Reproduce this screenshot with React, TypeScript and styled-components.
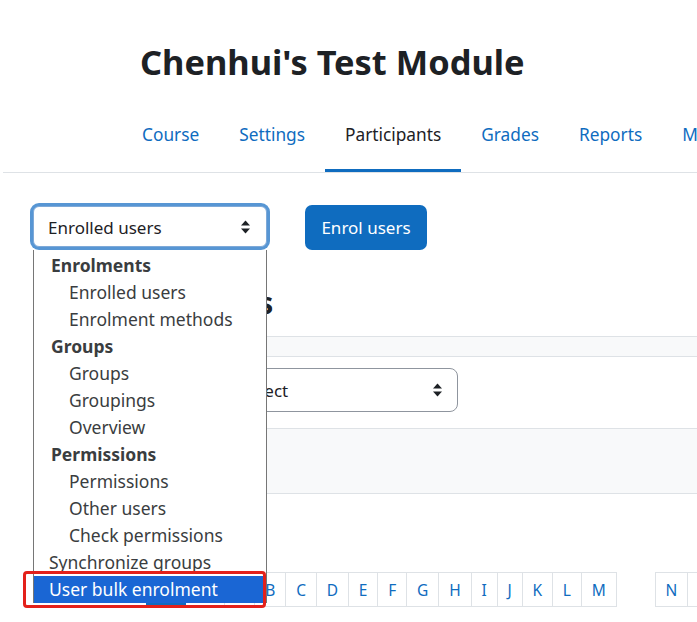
import React from "react";
import styled, { createGlobalStyle } from "styled-components";

const Global = createGlobalStyle`
  html, body { margin: 0; padding: 0; background: #fff; }
  body {
    font-family: "Noto Sans", "Open Sans", sans-serif;
    font-size: 17px;
    color: #1d2125;
    overflow: hidden;
  }
  * { box-sizing: border-box; }
`;

const Page = styled.div`
  width: 697px;
  height: 622px;
  overflow: hidden;
`;

const Header = styled.header`
  padding: 37px 0 0 140px;
  height: 100px;
`;

const Title = styled.h1`
  margin: 0;
  font-size: 34.4px;
  line-height: 50px;
  font-weight: 700;
  color: #1d2125;
  white-space: nowrap;
`;

const Nav = styled.nav`
  display: flex;
  margin-left: 3px;
  padding-left: 119px;
  border-bottom: 1px solid #dee2e6;
  white-space: nowrap;
`;

const Tab = styled.a<{ $active?: boolean }>`
  flex-shrink: 0;
  display: flex;
  align-items: center;
  height: 72px;
  padding: 0 20px;
  font-size: 17.3px;
  color: ${(p) => (p.$active ? "#1d2125" : "#0f6cbf")};
  border-bottom: 3px solid ${(p) => (p.$active ? "#0f6cbf" : "transparent")};
  text-decoration: none;
`;

const Main = styled.main`
  padding-top: 32px;
`;

const Toolbar = styled.div`
  display: flex;
  align-items: flex-start;
  gap: 38px;
  padding-left: 33px;
`;

const SelectWrap = styled.div`
  position: relative;
  width: 234px;
  margin-top: 1px;
`;

const FocusSelect = styled.div`
  display: flex;
  align-items: center;
  justify-content: space-between;
  height: 41px;
  padding: 1px 15px 0 14px;
  border: 1px solid #7ea9d8;
  border-radius: 6px;
  box-shadow: 0 0 0 3px #5796d4;
  color: #1d2125;
  font-size: 17px;
  background: #fff;
`;

const PrimaryButton = styled.button`
  height: 45px;
  width: 122px;
  border: none;
  border-radius: 7px;
  background: #0f6cbf;
  color: #fff;
  font-family: inherit;
  font-size: 17px;
  padding: 0;
`;

const Heading = styled.h2`
  margin: 35px 0 0;
  padding-left: 62px;
  font-size: 30px;
  line-height: 36px;
  font-weight: 700;
  color: #1d2125;
  white-space: nowrap;
`;

const Band = styled.div<{ $h: number; $top?: number }>`
  height: ${(p) => p.$h}px;
  margin-top: ${(p) => p.$top ?? 0}px;
  background: #f8f9fa;
  border-top: 1px solid #dee2e6;
  border-bottom: 1px solid #dee2e6;
  margin-left: 33px;
`;

const FilterRow = styled.div`
  padding: 11px 0 16px 222px;
`;

const PlainSelect = styled.div`
  display: flex;
  align-items: center;
  justify-content: space-between;
  width: 236px;
  height: 44px;
  padding: 0 14px 0 18px;
  border: 1px solid #8f959e;
  border-radius: 8px;
  font-size: 17px;
  color: #1d2125;
`;

const InitialBar = styled.div`
  display: flex;
  align-items: stretch;
  margin-top: 78px;
  padding-left: 33px;
  height: 35px;
  white-space: nowrap;
`;

const InitialLabel = styled.span`
  flex-shrink: 0;
  width: 113px;
  display: flex;
  align-items: center;
  font-size: 17px;
`;

const LetterGroup = styled.ul`
  flex-shrink: 0;
  display: flex;
  margin: 0 38px 0 0;
  padding: 0;
  list-style: none;
`;

const Letter = styled.li<{ $active?: boolean }>`
  flex-shrink: 0;
  display: flex;
  align-items: center;
  justify-content: center;
  padding: 0 9.9px;
  margin-left: -1px;
  border: 1px solid ${(p) => (p.$active ? "#0f6cbf" : "#dee2e6")};
  background: ${(p) => (p.$active ? "#0f6cbf" : "#fff")};
  color: ${(p) => (p.$active ? "#fff" : "#0f6cbf")};
  font-size: 15.5px;
  &:first-child { margin-left: 0; }
`;

const List = styled.div`
  position: absolute;
  top: calc(100% + 3px);
  left: 0;
  width: 234px;
  padding-top: 2px;
  background: #fff;
  border-left: 1px solid #767676;
  border-right: 1px solid #767676;
  z-index: 5;
`;

const Option = styled.div<{ $indent: number; $bold?: boolean; $selected?: boolean }>`
  height: 27px;
  line-height: 27px;
  padding-left: ${(p) => p.$indent}px;
  font-size: 17.5px;
  font-weight: ${(p) => (p.$bold ? 700 : 400)};
  color: ${(p) => (p.$selected ? "#fff" : "#3a3d40")};
  background: ${(p) => (p.$selected ? "#1a66d4" : "transparent")};
  white-space: nowrap;
`;

const Highlight = styled.div`
  position: absolute;
  left: -11px;
  top: 321px;
  width: 243px;
  height: 37px;
  border: 3px solid #e3211b;
  border-radius: 4px;
  pointer-events: none;
`;

const Arrows = () => (
  <svg width="11" height="16" viewBox="0 0 11 16" aria-hidden="true">
    <path d="M5.5 1.5 L10 6.5 H1 Z" fill="#1d2125" />
    <path d="M5.5 14.5 L10 9.5 H1 Z" fill="#1d2125" />
  </svg>
);

type Item = { label: string; indent: number; bold?: boolean; selected?: boolean };

const items: Item[] = [
  { label: "Enrolments", indent: 17, bold: true },
  { label: "Enrolled users", indent: 35 },
  { label: "Enrolment methods", indent: 35 },
  { label: "Groups", indent: 17, bold: true },
  { label: "Groups", indent: 35 },
  { label: "Groupings", indent: 35 },
  { label: "Overview", indent: 35 },
  { label: "Permissions", indent: 17, bold: true },
  { label: "Permissions", indent: 35 },
  { label: "Other users", indent: 35 },
  { label: "Check permissions", indent: 35 },
  { label: "Synchronize groups", indent: 15 },
  { label: "User bulk enrolment", indent: 15, selected: true },
];

const tabs = ["Course", "Settings", "Participants", "Grades", "Reports", "More"];
const firstHalf = "ABCDEFGHIJKLM".split("");
const secondHalf = "NOPQRSTUVWXYZ".split("");

export default function App() {
  return (
    <Page>
      <Global />
      <Header>
        <Title>Chenhui's Test Module</Title>
      </Header>
      <Nav>
        {tabs.map((t) => (
          <Tab key={t} $active={t === "Participants"}>
            {t}
          </Tab>
        ))}
      </Nav>
      <Main>
        <Toolbar>
          <SelectWrap>
            <FocusSelect>
              <span>Enrolled users</span>
              <Arrows />
            </FocusSelect>
            <List>
              {items.map((it, i) => (
                <Option key={i} $indent={it.indent} $bold={it.bold} $selected={it.selected}>
                  {it.label}
                </Option>
              ))}
              <Highlight />
            </List>
          </SelectWrap>
          <PrimaryButton>Enrol users</PrimaryButton>
        </Toolbar>
        <Heading>Enrolled users</Heading>
        <Band $h={21} $top={15} />
        <FilterRow>
          <PlainSelect>
            <span>Select</span>
            <Arrows />
          </PlainSelect>
        </FilterRow>
        <Band $h={66} />
        <InitialBar>
          <InitialLabel>First name</InitialLabel>
          <LetterGroup>
            <Letter $active>All</Letter>
          </LetterGroup>
          <LetterGroup>
            {firstHalf.map((l) => (
              <Letter key={l}>{l}</Letter>
            ))}
          </LetterGroup>
          <LetterGroup>
            {secondHalf.map((l) => (
              <Letter key={l}>{l}</Letter>
            ))}
          </LetterGroup>
        </InitialBar>
      </Main>
    </Page>
  );
}
